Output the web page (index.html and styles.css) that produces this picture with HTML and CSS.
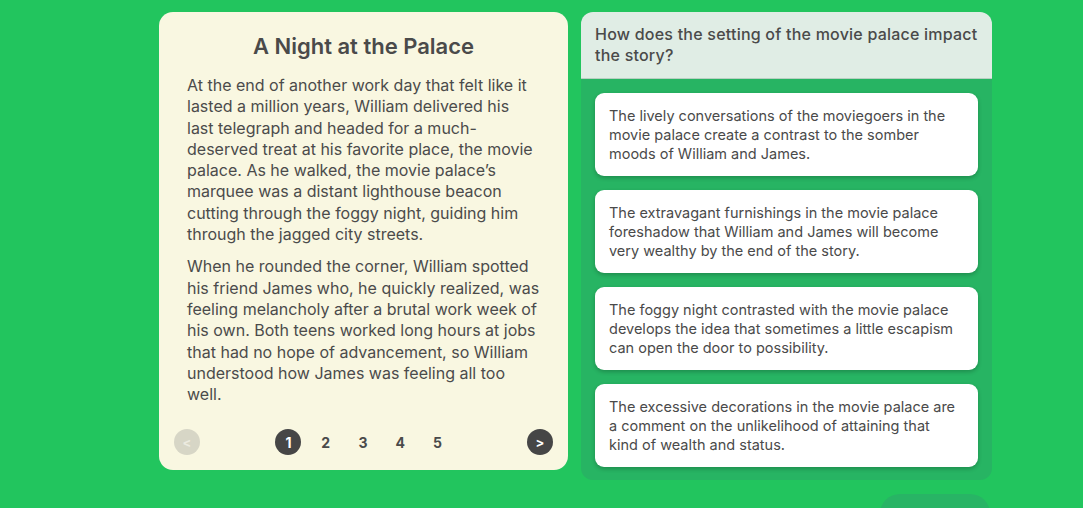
FILE: index.html
```html
<!DOCTYPE html>
<html>
<head>
<meta charset="utf-8">
<link rel="stylesheet" href="styles.css">
</head>
<body>
<div class="page">
  <div class="story">
    <h1 class="title">A Night at the Palace</h1>
    <p class="para">At the end of another work day that felt like it lasted a million years, William delivered his last telegraph and headed for a much-deserved treat at his favorite place, the movie palace. As he walked, the movie palace’s marquee was a distant lighthouse beacon cutting through the foggy night, guiding him through the jagged city streets.</p>
    <p class="para">When he rounded the corner, William spotted his friend James who, he quickly realized, was feeling melancholy after a brutal work week of his own. Both teens worked long hours at jobs that had no hope of advancement, so William understood how James was feeling all too well.</p>
    <div class="pager">
      <button class="nav prev">&lt;</button>
      <div class="pages">
        <span class="pg current">1</span>
        <span class="pg">2</span>
        <span class="pg">3</span>
        <span class="pg">4</span>
        <span class="pg">5</span>
      </div>
      <button class="nav next">&gt;</button>
    </div>
  </div>
  <div class="quiz">
    <div class="question">How does the setting of the movie palace impact the story?</div>
    <div class="options">
      <div class="option">The lively conversations of the moviegoers in the movie palace create a contrast to the somber moods of William and James.</div>
      <div class="option">The extravagant furnishings in the movie palace foreshadow that William and James will become very wealthy by the end of the story.</div>
      <div class="option">The foggy night contrasted with the movie palace develops the idea that sometimes a little escapism can open the door to possibility.</div>
      <div class="option">The excessive decorations in the movie palace are a comment on the unlikelihood of attaining that kind of wealth and status.</div>
    </div>
  </div>
</div>
<div class="footer"><div class="submit"></div></div>
</body>
</html>
```
FILE: styles.css
```css
html, body {
  margin: 0;
  padding: 0;
  background: #22c55e;
  font-family: Inter, "Noto Sans", sans-serif;
  color: #4a4a4a;
  height: 508px;
  overflow: hidden;
}
.page {
  display: flex;
  align-items: flex-start;
  gap: 13px;
  padding: 12px 0 0 159px;
}
.story {
  box-sizing: border-box;
  width: 409px;
  height: 458px;
  background: #f9f7e1;
  border-radius: 14px;
  padding: 21px 28px 15px 28px;
  display: flex;
  flex-direction: column;
}
.title {
  margin: 0 0 16px 0;
  text-align: center;
  font-size: 22px;
  line-height: 26px;
  font-weight: 600;
  color: #4a4a4a;
}
.para {
  margin: 0 0 11px 0;
  font-size: 16px;
  line-height: 21.3px;
  color: #4b4b4b;
}
.pager {
  margin-top: auto;
  display: flex;
  align-items: center;
  justify-content: space-between;
  margin-left: -13px;
  margin-right: -13px;
}
.nav {
  width: 26px;
  height: 26px;
  border-radius: 50%;
  border: none;
  padding: 0;
  font-family: Inter, sans-serif;
  font-size: 13px;
  font-weight: 700;
  color: #fff;
  display: flex;
  align-items: center;
  justify-content: center;
}
.prev { background: #d7d6c6; color: #ecebe0; }
.next { background: #464646; }
.pages {
  display: flex;
  align-items: center;
  gap: 11.3px;
  margin-left: -1px;
}
.pg {
  width: 26px;
  height: 26px;
  border-radius: 50%;
  display: flex;
  align-items: center;
  justify-content: center;
  font-size: 14px;
  font-weight: 700;
  color: #4a4a4a;
}
.pg.current { background: #464646; color: #fff; }
.quiz {
  width: 411px;
  height: 468px;
  background: #27b463;
  border-radius: 12px;
  overflow: hidden;
  display: flex;
  flex-direction: column;
}
.question {
  box-sizing: border-box;
  height: 67px;
  background: #e0ede5;
  border-bottom: 1px solid #b8d0c2;
  padding: 12px 10px 0 14px;
  font-size: 16px;
  line-height: 21px;
  letter-spacing: 0.22px;
  font-weight: 500;
  color: #4a4a4a;
}
.options {
  display: flex;
  flex-direction: column;
  gap: 14px;
  padding: 14px 14px 13px 14px;
}
.option {
  box-sizing: border-box;
  height: 83px;
  background: #fff;
  border-radius: 9px;
  padding: 13px 19px 0 14px;
  font-size: 14.5px;
  line-height: 19px;
  color: #4a4a4a;
  box-shadow: 0 2px 4px rgba(0, 0, 0, 0.22);
}
.footer {
  display: flex;
  justify-content: flex-end;
  height: 14px;
  overflow: hidden;
  margin-top: 14px;
  padding-right: 93px;
}
.submit {
  flex: none;
  width: 110px;
  height: 40px;
  border-radius: 20px;
  background: #28b465;
}
```
